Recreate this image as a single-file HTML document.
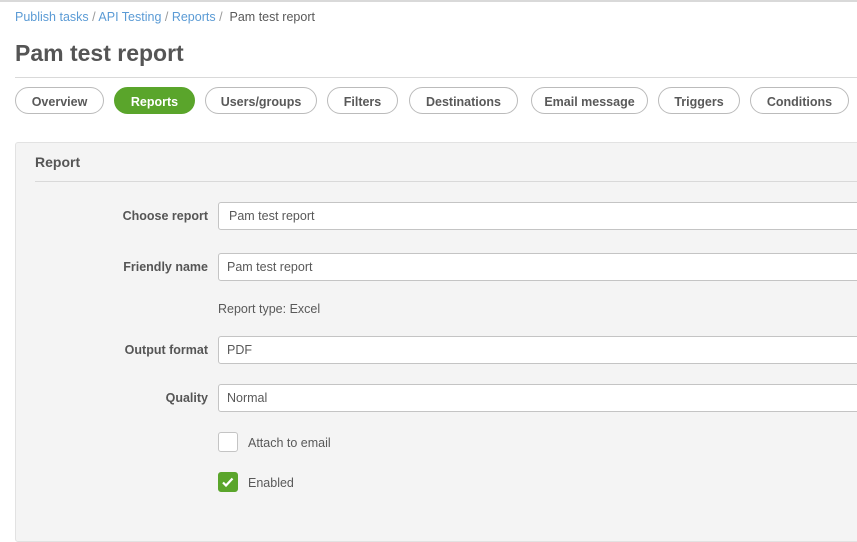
<!DOCTYPE html>
<html><head><style>
*{box-sizing:border-box;margin:0;padding:0}
body{width:857px;height:522px;overflow:hidden;background:#fff;font-family:"Liberation Sans",sans-serif;color:#595959;position:relative}
.topline{position:absolute;left:0;top:0;width:857px;height:2px;background:#d9d9d9}
.bc{position:absolute;left:15px;top:10px;font-size:12.5px;color:#5b9bd5}
.bc span{color:#999}.bc b{font-weight:normal;color:#595959}
h1{position:absolute;left:15px;top:40px;font-size:23px;font-weight:bold;color:#555}
.div{position:absolute;left:15px;top:77px;width:842px;height:1px;background:#d9d9d9}
.tab{position:absolute;top:87px;height:27px;border:1px solid #bbb;border-radius:14px;font-size:12.5px;font-weight:bold;color:#595959;text-align:center;line-height:25px;padding-top:2px;background:#fff}
.tab.on{background:#5aa52b;border-color:#5aa52b;color:#fff}
.panel{position:absolute;left:15px;top:142px;width:860px;height:400px;background:#f4f4f4;border:1px solid #e2e2e2;border-radius:3px}
.ph{position:absolute;left:35px;top:154px;font-size:14px;font-weight:bold;color:#555}
.pl{position:absolute;left:35px;top:181px;width:822px;height:1px;background:#d9d9d9}
.lab{position:absolute;right:649px;font-size:12.5px;font-weight:bold;color:#555}
.inp{position:absolute;left:218px;width:650px;height:28px;background:#fff;border:1px solid #c4c4c4;border-radius:3px;font-size:12.5px;line-height:26px;padding-left:8px;color:#595959}
.t{position:absolute;font-size:12.5px;color:#595959}
.cb{position:absolute;left:218px;width:20px;height:20px;border:1px solid #c4c4c4;border-radius:3px;background:#fff}
.cb.on{background:#5aa52b;border-color:#5aa52b}
</style></head><body>
<div class="topline"></div>
<div class="bc">Publish tasks <span>/</span> API Testing <span>/</span> Reports <span>/</span>&nbsp; <b>Pam test report</b></div>
<h1>Pam test report</h1>
<div class="div"></div>
<div class="tab" style="left:15px;width:89px">Overview</div>
<div class="tab on" style="left:114px;width:81px">Reports</div>
<div class="tab" style="left:205px;width:112px">Users/groups</div>
<div class="tab" style="left:327px;width:71px">Filters</div>
<div class="tab" style="left:409px;width:109px">Destinations</div>
<div class="tab" style="left:531px;width:117px">Email message</div>
<div class="tab" style="left:658px;width:82px">Triggers</div>
<div class="tab" style="left:750px;width:99px">Conditions</div>
<div class="panel"></div>
<div class="ph">Report</div>
<div class="pl"></div>
<div class="lab" style="top:209px">Choose report</div>
<div class="inp" style="top:202px;padding-left:10px">Pam test report</div>
<div class="lab" style="top:260px">Friendly name</div>
<div class="inp" style="top:253px">Pam test report</div>
<div class="t" style="left:218px;top:302px">Report type: Excel</div>
<div class="lab" style="top:343px">Output format</div>
<div class="inp" style="top:336px">PDF</div>
<div class="lab" style="top:391px">Quality</div>
<div class="inp" style="top:384px">Normal</div>
<div class="cb" style="top:432px"></div>
<div class="t" style="left:248px;top:436px">Attach to email</div>
<div class="cb on" style="top:472px"><svg width="18" height="18" viewBox="0 0 18 18"><path d="M4 9.5l3 3 6.5-7" stroke="#fff" stroke-width="2.2" fill="none"/></svg></div>
<div class="t" style="left:248px;top:476px">Enabled</div>
</body></html>
